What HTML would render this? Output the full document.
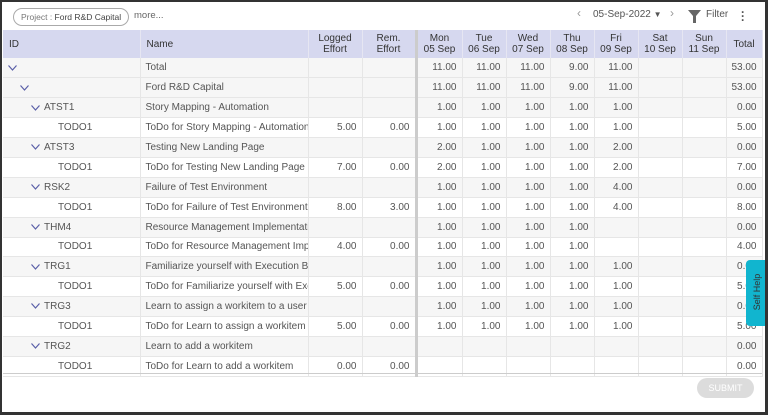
<!DOCTYPE html>
<html><head><style>
*{box-sizing:border-box;margin:0;padding:0}
body{width:768px;height:415px;background:#fff;font-family:"Liberation Sans",sans-serif;font-size:10px;color:#444;position:relative;overflow:hidden}
.frame{position:absolute;left:0;top:0;width:768px;height:415px;border:2px solid #333;border-right-width:3px;border-bottom-width:3px}
.chip{position:absolute;left:13px;top:8px;width:116px;height:18px;border:1px solid #aaa;border-radius:9px;font-size:8.5px;color:#777;line-height:16px;padding-left:7px;white-space:nowrap;overflow:hidden}
.chip b{font-weight:normal;color:#444}
.more{position:absolute;left:134px;top:10px;color:#666;font-size:9.5px}
.top{position:absolute;top:9px;font-size:10px;color:#555}
table{position:absolute;left:3px;top:30px;border-collapse:collapse;table-layout:fixed;width:759px}
th{background:#d6d8ef;font-weight:normal;color:#333;height:28px;font-size:10px;line-height:11px;border-right:1px solid #e6e6f2;text-align:center}
td{height:19.9px;border-right:1px solid #e6e6e6;border-bottom:1px solid #e6e6e6;padding:0 5px;white-space:nowrap;overflow:hidden;color:#555}
td.n{text-align:right}
tr.g td{background:#f6f6f6}
.sep{border-right:3px solid #ccc!important}
.chev{display:inline-block;width:9px;height:6px;margin-right:4px;vertical-align:middle}
.sub{position:absolute;left:697px;top:378px;width:57px;height:20px;border-radius:10px;background:#dcdcdc;color:#fff;font-size:9px;text-align:center;line-height:20px}
.help{position:absolute;left:746px;top:260px;width:22px;height:66px;background:#11b5cf;border-radius:4px 0 0 4px}
.help span{position:absolute;left:-16px;top:27px;transform:rotate(-90deg);font-size:9px;color:#333;width:54px;text-align:center}
.line{position:absolute;left:3px;top:373px;width:759px;border-top:1px solid #ccc}
</style></head><body>
<div class="chip">Project : <b>Ford R&amp;D Capital</b></div>
<div class="more">more...</div>
<div class="top" style="left:577px;color:#999;font-size:12px;top:6px">‹</div>
<div class="top" style="left:593px">05-Sep-2022 <span style="font-size:8px">▼</span></div>
<div class="top" style="left:670px;color:#999;font-size:12px;top:6px">›</div>
<svg style="position:absolute;left:688px;top:10px" width="13" height="13"><path d="M0 0H13L8 6V13H5V6Z" fill="#666"/></svg>
<div class="top" style="left:706px">Filter</div>
<div class="top" style="left:741px;font-weight:bold;line-height:4px;top:10px;font-size:12px">·<br>·<br>·</div>
<svg width="0" height="0" style="position:absolute"><defs><symbol id="c" viewBox="0 0 9 6"><path d="M0.5 0.5L4.5 5L8.5 0.5" fill="none" stroke="#5a5fa8" stroke-width="1.2"/></symbol></defs></svg>
<table>
<colgroup><col style="width:137px"><col style="width:168px"><col style="width:54px"><col style="width:54px"><col style="width:46px"><col style="width:44px"><col style="width:44px"><col style="width:44px"><col style="width:44px"><col style="width:44px"><col style="width:44px"><col style="width:36px"></colgroup>
<tr><th style="text-align:left;padding-left:6px">ID</th><th style="text-align:left;padding-left:6px">Name</th><th>Logged<br>Effort</th><th class="sep">Rem.<br>Effort</th><th>Mon<br>05 Sep</th><th>Tue<br>06 Sep</th><th>Wed<br>07 Sep</th><th>Thu<br>08 Sep</th><th>Fri<br>09 Sep</th><th>Sat<br>10 Sep</th><th>Sun<br>11 Sep</th><th>Total</th></tr>
<tr class="g"><td><svg class="chev"><use href="#c"/></svg></td><td>Total</td><td></td><td class="sep"></td><td class="n">11.00</td><td class="n">11.00</td><td class="n">11.00</td><td class="n">9.00</td><td class="n">11.00</td><td></td><td></td><td class="n">53.00</td></tr>
<tr class="g"><td style="padding-left:17px"><svg class="chev"><use href="#c"/></svg></td><td>Ford R&amp;D Capital</td><td></td><td class="sep"></td><td class="n">11.00</td><td class="n">11.00</td><td class="n">11.00</td><td class="n">9.00</td><td class="n">11.00</td><td></td><td></td><td class="n">53.00</td></tr>
<tr class="g"><td style="padding-left:28px"><svg class="chev"><use href="#c"/></svg>ATST1</td><td>Story Mapping - Automation</td><td></td><td class="sep"></td><td class="n">1.00</td><td class="n">1.00</td><td class="n">1.00</td><td class="n">1.00</td><td class="n">1.00</td><td></td><td></td><td class="n">0.00</td></tr>
<tr><td style="padding-left:55px">TODO1</td><td>ToDo for Story Mapping - Automation</td><td class="n">5.00</td><td class="n sep">0.00</td><td class="n">1.00</td><td class="n">1.00</td><td class="n">1.00</td><td class="n">1.00</td><td class="n">1.00</td><td></td><td></td><td class="n">5.00</td></tr>
<tr class="g"><td style="padding-left:28px"><svg class="chev"><use href="#c"/></svg>ATST3</td><td>Testing New Landing Page</td><td></td><td class="sep"></td><td class="n">2.00</td><td class="n">1.00</td><td class="n">1.00</td><td class="n">1.00</td><td class="n">2.00</td><td></td><td></td><td class="n">0.00</td></tr>
<tr><td style="padding-left:55px">TODO1</td><td>ToDo for Testing New Landing Page</td><td class="n">7.00</td><td class="n sep">0.00</td><td class="n">2.00</td><td class="n">1.00</td><td class="n">1.00</td><td class="n">1.00</td><td class="n">2.00</td><td></td><td></td><td class="n">7.00</td></tr>
<tr class="g"><td style="padding-left:28px"><svg class="chev"><use href="#c"/></svg>RSK2</td><td>Failure of Test Environment</td><td></td><td class="sep"></td><td class="n">1.00</td><td class="n">1.00</td><td class="n">1.00</td><td class="n">1.00</td><td class="n">4.00</td><td></td><td></td><td class="n">0.00</td></tr>
<tr><td style="padding-left:55px">TODO1</td><td>ToDo for Failure of Test Environment</td><td class="n">8.00</td><td class="n sep">3.00</td><td class="n">1.00</td><td class="n">1.00</td><td class="n">1.00</td><td class="n">1.00</td><td class="n">4.00</td><td></td><td></td><td class="n">8.00</td></tr>
<tr class="g"><td style="padding-left:28px"><svg class="chev"><use href="#c"/></svg>THM4</td><td>Resource Management Implementation</td><td></td><td class="sep"></td><td class="n">1.00</td><td class="n">1.00</td><td class="n">1.00</td><td class="n">1.00</td><td></td><td></td><td></td><td class="n">0.00</td></tr>
<tr><td style="padding-left:55px">TODO1</td><td>ToDo for Resource Management Implementation</td><td class="n">4.00</td><td class="n sep">0.00</td><td class="n">1.00</td><td class="n">1.00</td><td class="n">1.00</td><td class="n">1.00</td><td></td><td></td><td></td><td class="n">4.00</td></tr>
<tr class="g"><td style="padding-left:28px"><svg class="chev"><use href="#c"/></svg>TRG1</td><td>Familiarize yourself with Execution Board</td><td></td><td class="sep"></td><td class="n">1.00</td><td class="n">1.00</td><td class="n">1.00</td><td class="n">1.00</td><td class="n">1.00</td><td></td><td></td><td class="n">0.00</td></tr>
<tr><td style="padding-left:55px">TODO1</td><td>ToDo for Familiarize yourself with Execution</td><td class="n">5.00</td><td class="n sep">0.00</td><td class="n">1.00</td><td class="n">1.00</td><td class="n">1.00</td><td class="n">1.00</td><td class="n">1.00</td><td></td><td></td><td class="n">5.00</td></tr>
<tr class="g"><td style="padding-left:28px"><svg class="chev"><use href="#c"/></svg>TRG3</td><td>Learn to assign a workitem to a user</td><td></td><td class="sep"></td><td class="n">1.00</td><td class="n">1.00</td><td class="n">1.00</td><td class="n">1.00</td><td class="n">1.00</td><td></td><td></td><td class="n">0.00</td></tr>
<tr><td style="padding-left:55px">TODO1</td><td>ToDo for Learn to assign a workitem to a user</td><td class="n">5.00</td><td class="n sep">0.00</td><td class="n">1.00</td><td class="n">1.00</td><td class="n">1.00</td><td class="n">1.00</td><td class="n">1.00</td><td></td><td></td><td class="n">5.00</td></tr>
<tr class="g"><td style="padding-left:28px"><svg class="chev"><use href="#c"/></svg>TRG2</td><td>Learn to add a workitem</td><td></td><td class="sep"></td><td></td><td></td><td></td><td></td><td></td><td></td><td></td><td class="n">0.00</td></tr>
<tr><td style="padding-left:55px">TODO1</td><td>ToDo for Learn to add a workitem</td><td class="n">0.00</td><td class="n sep">0.00</td><td></td><td></td><td></td><td></td><td></td><td></td><td></td><td class="n">0.00</td></tr>
</table>
<div class="line"></div>
<div class="sub">SUBMIT</div>
<div class="help"><span>Self Help</span></div>
<div class="frame"></div>
</body></html>
